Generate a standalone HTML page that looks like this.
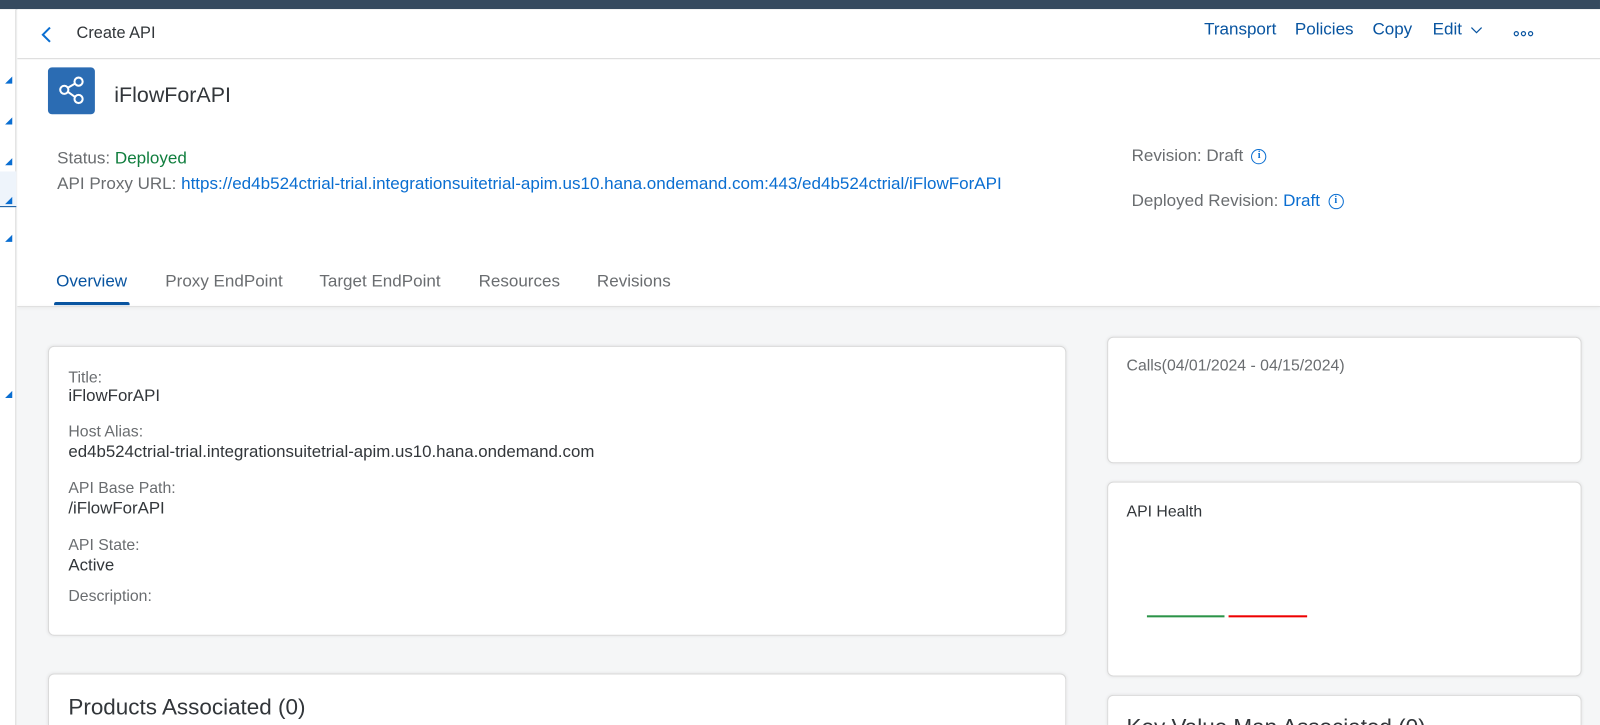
<!DOCTYPE html>
<html><head><style>
*{margin:0;padding:0;box-sizing:border-box}
html,body{width:1600px;height:725px;overflow:hidden}
body{background:#f5f6f7;font-family:"Liberation Sans",sans-serif;color:#32363a;position:relative}
#w{position:absolute;left:0;top:0;width:1568px;height:710.5px;overflow:hidden;transform:scale(1.0204);transform-origin:0 0}
.a{position:absolute;white-space:nowrap}
.top{left:0;top:0;width:1568px;height:9px;background:#354a5f}
.side{left:0;top:9px;width:16px;height:702px;background:#fff;border-right:1px solid #d9d9d9}
.tri{width:0;height:0;border-left:7px solid transparent;border-bottom:7px solid #0a6ed1;left:5px}
.hdr{left:17px;top:9px;width:1551px;height:291px;background:#fff}
.line{left:17px;top:57px;width:1551px;height:1px;background:#d9d9d9}
.shadow{left:17px;top:300px;width:1551px;height:1px;background:#ddd;box-shadow:0 1px 3px rgba(0,0,0,.1)}
.blue{color:#0a6ed1}
.dk{color:#0854a0}
.g{color:#6a6d70}
.card{background:#fff;border:1px solid #d9d9d9;border-radius:6px;box-shadow:0 0 3px rgba(0,0,0,.08)}
.cardb{border-bottom:none;border-radius:6px 6px 0 0}
.lbl{font-size:15.5px;color:#6a6d70}
.val{font-size:16.5px;color:#32363a}
.info{display:inline-block;width:15px;height:15px;border:1.5px solid #0a6ed1;border-radius:50%;font-size:10px;font-weight:bold;color:#0a6ed1;text-align:center;line-height:12px;font-family:"Liberation Serif",serif;vertical-align:middle;margin-left:8px}
</style></head><body><div id="w">
<div class="a top"></div>
<div class="a side"></div>
<div class="a tri" style="top:75px"></div>
<div class="a tri" style="top:115px"></div>
<div class="a tri" style="top:155px"></div>
<div class="a" style="left:0;top:168px;width:16px;height:35px;background:#eef4fb;border-bottom:1px solid #0854a0"></div>
<div class="a tri" style="top:193px"></div>
<div class="a tri" style="top:230px"></div>
<div class="a tri" style="top:383px"></div>
<div class="a hdr"></div>
<div class="a line"></div>
<svg class="a" style="left:38px;top:24px" width="16" height="20"><path d="M11 3 L4 10 L11 17" fill="none" stroke="#0a6ed1" stroke-width="2"/></svg>
<div class="a" style="left:75px;top:24px;font-size:16px">Create API</div>
<div class="a dk" style="left:1180px;top:19px;font-size:16.7px">Transport</div>
<div class="a dk" style="left:1269px;top:19px;font-size:16.7px">Policies</div>
<div class="a dk" style="left:1345px;top:19px;font-size:16.7px">Copy</div>
<div class="a dk" style="left:1404px;top:19px;font-size:16.7px">Edit</div>
<svg class="a" style="left:1440px;top:24px" width="14" height="10"><path d="M2 3 L7 8 L12 3" fill="none" stroke="#0854a0" stroke-width="1.2"/></svg>
<svg class="a" style="left:1482px;top:29px" width="22" height="8"><g fill="none" stroke="#0854a0" stroke-width="1.2"><circle cx="4" cy="4" r="2"/><circle cx="11" cy="4" r="2"/><circle cx="18" cy="4" r="2"/></g></svg>
<div class="a" style="left:47px;top:66px;width:46px;height:46px;background:#2b6cb3;border-radius:4px"></div>
<svg class="a" style="left:47px;top:66px" width="46" height="46"><g fill="none" stroke="#fff" stroke-width="2"><circle cx="16" cy="22" r="4"/><circle cx="30" cy="14" r="4"/><circle cx="30" cy="31" r="4"/><path d="M19.5 20 L26.5 16 M19.5 24 L26.5 29"/></g></svg>
<div class="a" style="left:112px;top:82px;font-size:21px">iFlowForAPI</div>
<div class="a" style="left:56px;top:145px;font-size:16.7px"><span class="g">Status: </span><span style="color:#107e3e">Deployed</span></div>
<div class="a" style="left:56px;top:170px;font-size:16.7px"><span class="g">API Proxy URL: </span><span style="color:#0a6ed1">https://ed4b524ctrial-trial.integrationsuitetrial-apim.us10.hana.ondemand.com:443/ed4b524ctrial/iFlowForAPI</span></div>
<div class="a g" style="left:1109px;top:143px;font-size:16.7px">Revision: Draft<span class="info">i</span></div>
<div class="a" style="left:1109px;top:187px;font-size:16.7px"><span class="g">Deployed Revision: </span><span class="blue">Draft</span><span class="info">i</span></div>
<div class="a dk" style="left:55px;top:266px;font-size:16.7px">Overview</div>
<div class="a" style="left:53px;top:296px;width:74px;height:3px;background:#0854a0;border-radius:2px 2px 0 0"></div>
<div class="a g" style="left:162px;top:266px;font-size:16.7px">Proxy EndPoint</div>
<div class="a g" style="left:313px;top:266px;font-size:16.7px">Target EndPoint</div>
<div class="a g" style="left:469px;top:266px;font-size:16.7px">Resources</div>
<div class="a g" style="left:585px;top:266px;font-size:16.7px">Revisions</div>
<div class="a shadow"></div>
<div class="a card" style="left:47px;top:339px;width:998px;height:284px"></div>
<div class="a lbl" style="left:67px;top:362px">Title:</div>
<div class="a val" style="left:67px;top:379px">iFlowForAPI</div>
<div class="a lbl" style="left:67px;top:415px">Host Alias:</div>
<div class="a val" style="left:67px;top:434px">ed4b524ctrial-trial.integrationsuitetrial-apim.us10.hana.ondemand.com</div>
<div class="a lbl" style="left:67px;top:470px">API Base Path:</div>
<div class="a val" style="left:67px;top:489px">/iFlowForAPI</div>
<div class="a lbl" style="left:67px;top:526px">API State:</div>
<div class="a val" style="left:67px;top:545px">Active</div>
<div class="a lbl" style="left:67px;top:576px">Description:</div>
<div class="a card cardb" style="left:47px;top:660px;width:998px;height:51px;overflow:hidden">
<div class="a" style="left:19px;top:19px;font-size:22px">Products Associated (0)</div></div>
<div class="a card" style="left:1085px;top:330px;width:465px;height:124px"></div>
<div class="a g" style="left:1104px;top:350px;font-size:15.5px">Calls(04/01/2024 - 04/15/2024)</div>
<div class="a card" style="left:1085px;top:472px;width:465px;height:191px"></div>
<div class="a" style="left:1104px;top:493px;font-size:15.5px">API Health</div>
<div class="a" style="left:1124px;top:603px;width:76px;height:2px;background:#2b9348"></div>
<div class="a" style="left:1204px;top:603px;width:77px;height:2px;background:#e00"></div>
<div class="a card cardb" style="left:1085px;top:681px;width:465px;height:30px;overflow:hidden">
<div class="a" style="left:18px;top:18px;font-size:22px">Key Value Map Associated (0)</div></div>
</div></body></html>
